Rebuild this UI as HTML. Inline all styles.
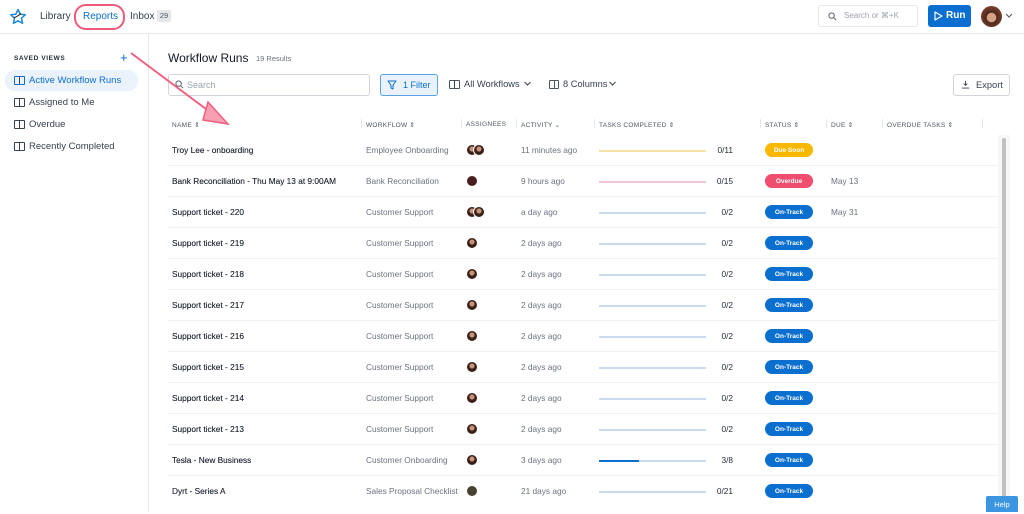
<!DOCTYPE html><html><head><style>
*{margin:0;padding:0;box-sizing:border-box}
body{width:1024px;height:512px;overflow:hidden;background:#fff;font-family:"Liberation Sans",sans-serif;position:relative;color:#1f2937}
.a{position:absolute}
.top{left:0;top:0;width:1024px;height:34px;border-bottom:1px solid #e5e7eb}
.nav{font-size:10px;color:#374151;top:11px}
.side{left:0;top:34px;width:149px;height:478px;border-right:1px solid #e5e7eb}
.sv{font-size:9.5px;color:#374151;left:29px}
.bk{left:14px;width:11px;height:9px;border:1.3px solid #374151;border-radius:1px}
.bk:after{content:"";position:absolute;left:3.5px;top:-1px;width:0;height:8px;border-left:1.3px solid #374151}
.th{font-size:6.5px;color:#4b5563;top:121px;letter-spacing:.3px}
.sep{top:119px;width:1px;height:9px;background:#e5e7eb}
.row{left:168px;width:830px;height:31px;border-bottom:1px solid #f0f1f3}
.nm{left:4px;font-size:8.3px;color:#111827;top:10px;-webkit-text-stroke:.1px #111827}
.wf{left:198px;font-size:8.3px;color:#6b7280;top:10px}
.ac{left:353px;font-size:8.3px;color:#6b7280;top:10px}
.bar{left:431px;top:15px;width:107px;height:2px;background:#c9dcef}
.ct{left:540px;width:25px;text-align:right;font-size:8.3px;color:#1f2937;top:10px}
.pill{left:597px;top:8px;width:48px;height:14px;border-radius:7px;color:#fff;font-size:6.5px;font-weight:bold;display:flex;align-items:center;justify-content:center;background:#0b6fcf}
.du{left:663px;font-size:8.3px;color:#6b7280;top:10px}
.av{top:9px;width:12px;height:12px;border-radius:50%;background:radial-gradient(circle at 50% 40%,#c8937a 0 30%,#3a2118 35%);border:1px solid #fff}
</style></head><body>
<div class="a top"></div>
<svg class="a" style="left:9px;top:8px" width="18" height="18" viewBox="0 0 24 24"><path d="M12 2l2.9 6.3 6.9.7-5.2 4.6 1.5 6.8L12 17l-6.1 3.4 1.5-6.8L2.2 9l6.9-.7z" fill="none" stroke="#1d8ae0" stroke-width="2" stroke-linejoin="round"/><path d="M6 13c4-1 8-4 10-6" stroke="#333" stroke-width="1.6" fill="none"/></svg>
<div class="a nav" style="left:40px">Library</div>
<div class="a nav" style="left:83px;color:#0b6fcf">Reports</div>
<div class="a" style="left:74px;top:4px;width:51px;height:26px;border:2.5px solid #ef5a7a;border-radius:12px"></div>
<div class="a nav" style="left:130px">Inbox</div>
<div class="a" style="left:157px;top:10px;width:14px;height:12px;background:#e5e7eb;border-radius:2px;font-size:7.5px;color:#4b5563;text-align:center;line-height:12px">29</div>
<div class="a" style="left:818px;top:5px;width:100px;height:22px;border:1px solid #e5e7eb;border-radius:3px;font-size:8px;color:#9ca3af;line-height:20px;padding-left:25px">Search or ⌘+K</div>
<svg class="a" style="left:828px;top:12px" width="9" height="9" viewBox="0 0 10 10"><circle cx="4" cy="4" r="3" stroke="#6b7280" fill="none" stroke-width="1.2"/><path d="M6.3 6.3L9 9" stroke="#6b7280" stroke-width="1.2"/></svg>
<div class="a" style="left:928px;top:5px;width:43px;height:22px;background:#0b6fcf;border-radius:3px;color:#fff;font-size:10px;font-weight:bold;line-height:22px;padding-left:18px">Run</div>
<svg class="a" style="left:933px;top:11px" width="10" height="10" viewBox="0 0 10 10"><path d="M2 1l7 4-7 4z" fill="none" stroke="#fff" stroke-width="1.2" stroke-linejoin="round"/></svg>
<div class="a" style="left:981px;top:6px;width:21px;height:21px;border-radius:50%;background:radial-gradient(circle at 50% 55%,#d6a184 0 28%,#4a2a1e 33%,#7a3d2a 70%)"></div>
<svg class="a" style="left:1005px;top:13px" width="8" height="6" viewBox="0 0 8 6"><path d="M1 1l3 3 3-3" stroke="#4b5563" fill="none"/></svg>

<div class="a side"></div>
<div class="a" style="left:14px;top:55px;font-size:6.5px;font-weight:bold;letter-spacing:.6px;color:#1f2937">SAVED VIEWS</div>
<div class="a" style="left:120px;top:50px;font-size:13px;color:#0b6fcf">+</div>
<div class="a" style="left:5px;top:70px;width:133px;height:21px;background:#eaf2fb;border-radius:10px"></div>
<div class="a bk" style="top:76px;border-color:#0b6fcf"></div>
<div class="a sv" style="top:75px;color:#0b6fcf">Active Workflow Runs</div>
<div class="a bk" style="top:98px"></div><div class="a sv" style="top:97px">Assigned to Me</div>
<div class="a bk" style="top:120px"></div><div class="a sv" style="top:119px">Overdue</div>
<div class="a bk" style="top:142px"></div><div class="a sv" style="top:141px">Recently Completed</div>

<div class="a" style="left:168px;top:51px;font-size:12px;color:#111827">Workflow Runs</div>
<div class="a" style="left:256px;top:54px;font-size:7.5px;color:#6b7280">19 Results</div>
<div class="a" style="left:168px;top:74px;width:202px;height:22px;border:1px solid #d1d5db;border-radius:3px;font-size:9px;color:#9ca3af;line-height:20px;padding-left:18px">Search</div>
<svg class="a" style="left:175px;top:80px" width="9" height="9" viewBox="0 0 10 10"><circle cx="4" cy="4" r="3" stroke="#6b7280" fill="none" stroke-width="1.2"/><path d="M6.3 6.3L9 9" stroke="#6b7280" stroke-width="1.2"/></svg>
<div class="a" style="left:380px;top:74px;width:58px;height:22px;border:1px solid #5aa2e6;background:#eaf2fb;border-radius:3px;font-size:9px;color:#0b6fcf;line-height:20px;padding-left:22px">1 Filter</div>
<svg class="a" style="left:387px;top:80px" width="10" height="10" viewBox="0 0 10 10"><path d="M1 1h8L6 5v4L4 8V5z" fill="none" stroke="#0b6fcf" stroke-linejoin="round"/></svg>
<div class="a bk" style="left:449px;top:80px;border-color:#4b5563"></div>
<div class="a" style="left:464px;top:79px;font-size:9.3px;color:#374151">All Workflows</div>
<svg class="a" style="left:523px;top:81px" width="9" height="6" viewBox="0 0 8 6"><path d="M1 1l3 3 3-3" stroke="#374151" fill="none"/></svg>
<div class="a" style="left:549px;top:80px;width:10px;height:9px;border:1.2px solid #4b5563;border-radius:1px"></div><div class="a" style="left:554px;top:80px;width:1px;height:9px;background:#4b5563"></div>
<div class="a" style="left:563px;top:79px;font-size:9.3px;color:#374151">8 Columns</div>
<svg class="a" style="left:608px;top:81px" width="9" height="6" viewBox="0 0 8 6"><path d="M1 1l3 3 3-3" stroke="#374151" fill="none"/></svg>
<div class="a" style="left:953px;top:74px;width:57px;height:22px;border:1px solid #d1d5db;border-radius:3px;font-size:9.3px;color:#374151;line-height:20px;padding-left:22px">Export</div>
<svg class="a" style="left:961px;top:80px" width="9" height="9" viewBox="0 0 10 10"><path d="M5 1v5M3 4l2 2 2-2M1 9h8" stroke="#374151" fill="none"/></svg>

<div class="a th" style="left:172px">NAME ⇕</div>
<div class="a sep" style="left:361px"></div><div class="a th" style="left:366px">WORKFLOW ⇕</div>
<div class="a sep" style="left:461px"></div><div class="a th" style="left:466px">ASSIGNEES</div>
<div class="a sep" style="left:516px"></div><div class="a th" style="left:521px">ACTIVITY ⌄</div>
<div class="a sep" style="left:594px"></div><div class="a th" style="left:599px">TASKS COMPLETED ⇕</div>
<div class="a sep" style="left:760px"></div><div class="a th" style="left:765px">STATUS ⇕</div>
<div class="a sep" style="left:826px"></div><div class="a th" style="left:831px">DUE ⇕</div>
<div class="a sep" style="left:882px"></div><div class="a th" style="left:887px">OVERDUE TASKS ⇕</div>
<div class="a sep" style="left:982px"></div>

<div class="a" style="left:998px;top:135px;width:12px;height:377px;background:#f7f7f7"></div>
<div class="a" style="left:1002px;top:138px;width:4px;height:374px;background:#c1c1c1;border-radius:2px"></div>

<div class="a row" style="top:135px"><div class="a nm">Troy Lee - onboarding</div><div class="a wf">Employee Onboarding</div><div class="a av" style="left:298px"></div><div class="a av" style="left:305px"></div><div class="a ac">11 minutes ago</div><div class="a bar" style="background:#f6e3a6"></div><div class="a ct">0/11</div><div class="a pill" style="background:#f9b800">Due Soon</div></div>
<div class="a row" style="top:166px"><div class="a nm">Bank Reconciliation - Thu May 13 at 9:00AM</div><div class="a wf">Bank Reconciliation</div><div class="a av" style="left:298px;background:#4a1e1e"></div><div class="a ac">9 hours ago</div><div class="a bar" style="background:#f3c5d0"></div><div class="a ct">0/15</div><div class="a pill" style="background:#f04e6e">Overdue</div><div class="a du">May 13</div></div>
<div class="a row" style="top:197px"><div class="a nm">Support ticket - 220</div><div class="a wf">Customer Support</div><div class="a av" style="left:298px"></div><div class="a av" style="left:305px"></div><div class="a ac">a day ago</div><div class="a bar"></div><div class="a ct">0/2</div><div class="a pill">On-Track</div><div class="a du">May 31</div></div>
<div class="a row" style="top:228px"><div class="a nm">Support ticket - 219</div><div class="a wf">Customer Support</div><div class="a av" style="left:298px"></div><div class="a ac">2 days ago</div><div class="a bar"></div><div class="a ct">0/2</div><div class="a pill">On-Track</div></div>
<div class="a row" style="top:259px"><div class="a nm">Support ticket - 218</div><div class="a wf">Customer Support</div><div class="a av" style="left:298px"></div><div class="a ac">2 days ago</div><div class="a bar"></div><div class="a ct">0/2</div><div class="a pill">On-Track</div></div>
<div class="a row" style="top:290px"><div class="a nm">Support ticket - 217</div><div class="a wf">Customer Support</div><div class="a av" style="left:298px"></div><div class="a ac">2 days ago</div><div class="a bar"></div><div class="a ct">0/2</div><div class="a pill">On-Track</div></div>
<div class="a row" style="top:321px"><div class="a nm">Support ticket - 216</div><div class="a wf">Customer Support</div><div class="a av" style="left:298px"></div><div class="a ac">2 days ago</div><div class="a bar"></div><div class="a ct">0/2</div><div class="a pill">On-Track</div></div>
<div class="a row" style="top:352px"><div class="a nm">Support ticket - 215</div><div class="a wf">Customer Support</div><div class="a av" style="left:298px"></div><div class="a ac">2 days ago</div><div class="a bar"></div><div class="a ct">0/2</div><div class="a pill">On-Track</div></div>
<div class="a row" style="top:383px"><div class="a nm">Support ticket - 214</div><div class="a wf">Customer Support</div><div class="a av" style="left:298px"></div><div class="a ac">2 days ago</div><div class="a bar"></div><div class="a ct">0/2</div><div class="a pill">On-Track</div></div>
<div class="a row" style="top:414px"><div class="a nm">Support ticket - 213</div><div class="a wf">Customer Support</div><div class="a av" style="left:298px"></div><div class="a ac">2 days ago</div><div class="a bar"></div><div class="a ct">0/2</div><div class="a pill">On-Track</div></div>
<div class="a row" style="top:445px"><div class="a nm">Tesla - New Business</div><div class="a wf">Customer Onboarding</div><div class="a av" style="left:298px"></div><div class="a ac">3 days ago</div><div class="a bar"><div style="width:40px;height:2px;background:#0b6fcf"></div></div><div class="a ct">3/8</div><div class="a pill">On-Track</div></div>
<div class="a row" style="top:476px;border:none"><div class="a nm">Dyrt - Series A</div><div class="a wf">Sales Proposal Checklist</div><div class="a av" style="left:298px;background:#4a4030"></div><div class="a ac">21 days ago</div><div class="a bar"></div><div class="a ct">0/21</div><div class="a pill">On-Track</div></div>

<div class="a" style="left:986px;top:496px;width:32px;height:16px;background:#3b95e0;border-radius:2px 2px 0 0;color:#fff;font-size:7.5px;text-align:center;line-height:18px">Help</div>

<svg class="a" style="left:0;top:0" width="260" height="140" viewBox="0 0 260 140"><path d="M131 53L218 118" stroke="#f0607e" stroke-width="2" fill="none"/><path d="M208 102l20 22-25 -4z" fill="#f7a0b3" stroke="#f0607e" stroke-width="1.5"/></svg>
</body></html>
